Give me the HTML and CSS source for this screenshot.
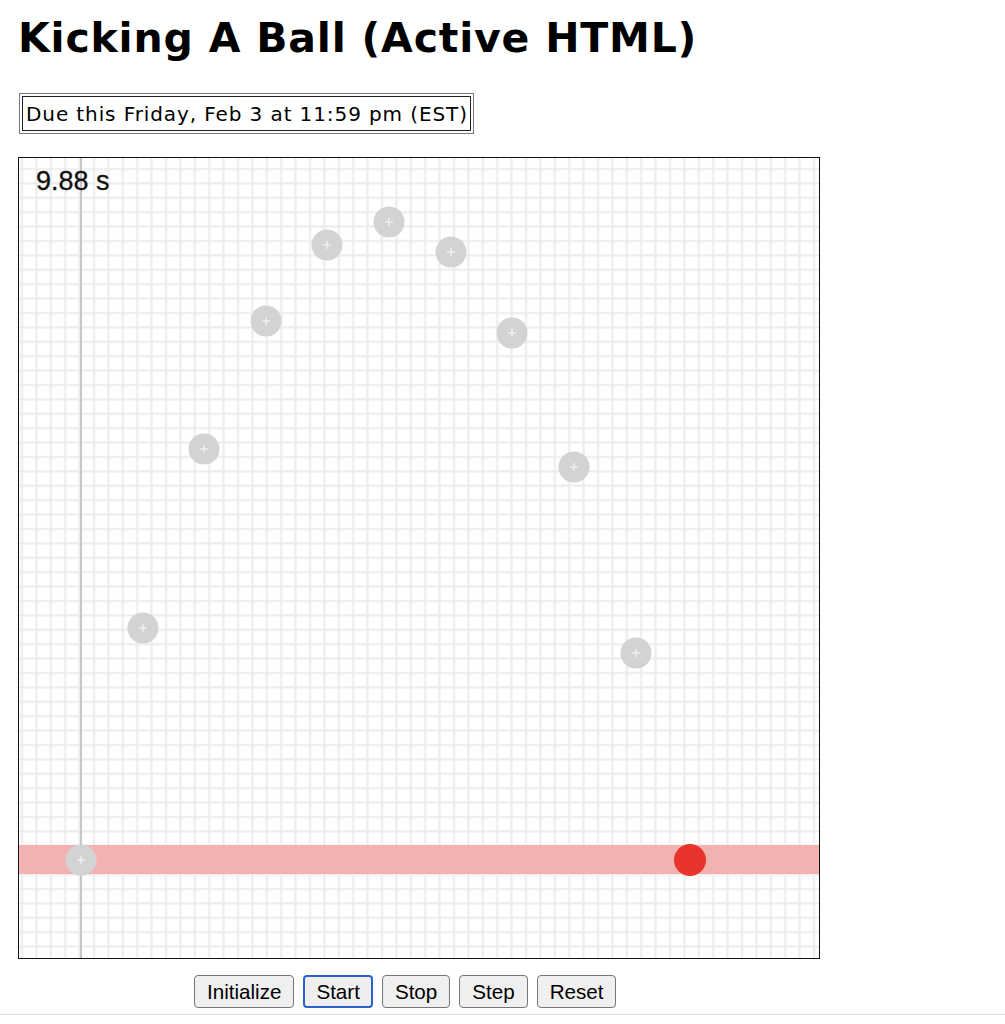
FILE: index.html
```html
<!DOCTYPE html>
<html lang="en">
<head>
    <meta charset="UTF-8">
    <meta name="viewport" content="width=device-width, initial-scale=1.0">
    <title>Kicking A Ball (Active HTML)</title>
    <link rel="stylesheet" href="styles.css">
</head>
<body>
    <div class="page">
        <h1>Kicking A Ball (Active HTML)</h1>

        <div class="due">
            <span class="due-text">Due this Friday, Feb 3 at 11:59 pm (EST)</span>
        </div>

        <div class="stage">
            <svg width="800" height="800" viewBox="0 0 800 800">
                <defs>
                    <pattern id="grid" x="-4.2" y="-10.6" width="14.4" height="14.4" patternUnits="userSpaceOnUse">
                        <path d="M7.2 0 V14.4 M0 7.2 H14.4" stroke="#ebebeb" stroke-width="2" fill="none"/>
                    </pattern>
                    <g id="ghost">
                        <circle r="15.5" fill="#d3d3d3"/>
                        <path d="M-4 0 H4 M0 -4 V4" stroke="#efefef" stroke-width="1.5"/>
                    </g>
                </defs>
                <rect width="800" height="800" fill="#fff"/>
                <rect width="800" height="800" fill="url(#grid)"/>
                <line x1="62" y1="0" x2="62" y2="800" stroke="#c6c6c6" stroke-width="2"/>
                <rect x="0" y="687" width="800" height="29" fill="#f3b2b2"/>
                <text class="clock" x="17" y="32">9.88 s</text>

                <!-- trail of earlier positions -->
                <use href="#ghost" x="62" y="702"/>
                <use href="#ghost" x="124" y="470"/>
                <use href="#ghost" x="185" y="291"/>
                <use href="#ghost" x="247" y="163"/>
                <use href="#ghost" x="308" y="87"/>
                <use href="#ghost" x="370" y="64"/>
                <use href="#ghost" x="432" y="94"/>
                <use href="#ghost" x="493" y="175"/>
                <use href="#ghost" x="555" y="309"/>
                <use href="#ghost" x="617" y="495"/>

                <circle cx="671" cy="702" r="16" fill="#e8342a"/>
            </svg>
        </div>

        <div class="controls">
            <button>Initialize</button>
            <button class="active">Start</button>
            <button>Stop</button>
            <button>Step</button>
            <button>Reset</button>
        </div>
    </div>
    <hr>
</body>
</html>
```

FILE: styles.css
```css
body {
    margin: 0;
    background-color: #fff;
    color: #000;
}
.page {
    padding-left: 18px;
}
h1 {
    font-family: "DejaVu Sans", Verdana, sans-serif;
    font-size: 41px;
    line-height: 48px;
    font-weight: bold;
    letter-spacing: 0.8px;
    margin: 14px 0 31px 0;
}
.due {
    display: inline-block;
    margin-left: 1px;
    border: 1px solid #7a7a7a;
    padding: 2px;
}
.due-text {
    display: block;
    font-family: "DejaVu Sans", Verdana, sans-serif;
    font-size: 20px;
    line-height: 24px;
    letter-spacing: 0.9px;
    padding: 5px 2px 4px 3px;
    border: 1px solid #222;
}
.stage {
    width: 800px;
    height: 800px;
    margin-top: 23px;
    border: 1px solid #111;
}
.stage svg {
    display: block;
}
.clock {
    font-family: "Liberation Sans", Arial, sans-serif;
    font-size: 27px;
    fill: #111;
    stroke: #111;
    stroke-width: 0.3px;
}
.controls {
    display: flex;
    gap: 9px;
    margin-top: 16px;
    padding-left: 176px;
}
button {
    font-family: "Liberation Sans", Arial, sans-serif;
    font-size: 20.6px;
    height: 33px;
    padding: 0 12px;
    color: #000;
    background-color: #efefef;
    border: 1px solid #767676;
    border-radius: 4px;
}
button.active {
    border: 2px solid #2b62cf;
    padding: 0 11px;
}
hr {
    margin: 6px 0 0 0;
    border: none;
    border-top: 1px solid #dcdcdc;
}
```
